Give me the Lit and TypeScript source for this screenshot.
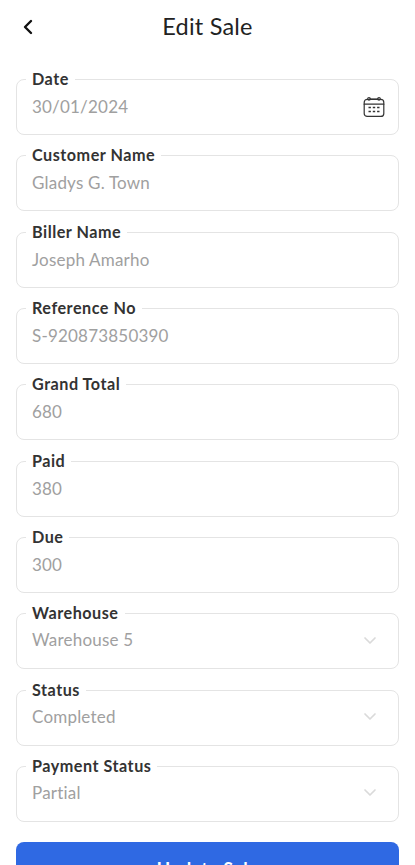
import { LitElement, html, css } from "lit";
import { customElement } from "lit/decorators.js";

const fields: [string, string, string?][] = [
  ["Date", "30/01/2024", "cal"],
  ["Customer Name", "Gladys G. Town"],
  ["Biller Name", "Joseph Amarho"],
  ["Reference No", "S-920873850390"],
  ["Grand Total", "680"],
  ["Paid", "380"],
  ["Due", "300"],
  ["Warehouse", "Warehouse 5", "down"],
  ["Status", "Completed", "down"],
  ["Payment Status", "Partial", "down"],
];

const cal = html`<svg class="cal" viewBox="0 0 22 22" fill="none" stroke="#333" stroke-width="1.2" stroke-linecap="round">
  <rect x="1.2" y="3.4" width="19.6" height="17" rx="3"/>
  <path d="M1.2 8.2h19.6M6.6 3h8.8"/>
  <circle cx="6" cy="2.8" r="1.3"/><circle cx="16" cy="2.8" r="1.3"/>
  <path d="M5.5 11.6h2.4M9.8 11.6h2.4M14.1 11.6h2.4M5.5 15.4h2.4M9.8 15.4h2.4M14.1 15.4h2.4" stroke-width="1.5" stroke-linecap="butt"/>
</svg>`;
const down = html`<svg class="down" viewBox="0 0 14 9" fill="none" stroke="#dadada" stroke-width="1.7" stroke-linecap="round" stroke-linejoin="round"><path d="M2 2l5 5 5-5"/></svg>`;

@customElement("app-root")
export class AppRoot extends LitElement {
  static styles = css`
    :host { display: block; width: 415px; height: 865px; overflow: hidden; background: #fff; }
    .head { height: 54px; display: flex; align-items: center; justify-content: center; position: relative; }
    .head h1 { margin: 0; font: 400 23.5px/1 Lato, "Noto Sans", sans-serif; letter-spacing: .2px; color: #222; }
    .back { position: absolute; left: 23px; top: 19px; width: 10px; height: 16px; }
    .form { display: flex; flex-direction: column; gap: 20.33px; padding: 25px 16px 0; }
    .field { position: relative; height: 56px; box-sizing: border-box; border: 1px solid #e4e4e4; border-radius: 8px; display: flex; align-items: center; justify-content: space-between; padding: 0 15px; }
    .label { position: absolute; left: 9px; top: -11px; padding: 0 6px; background: #fff; font: 700 16.2px/20px Lato, "Noto Sans", sans-serif; letter-spacing: .5px; color: #333; }
    .val { font: 400 17px/22px Lato, "Noto Sans", sans-serif; color: #a0a0a0; letter-spacing: .2px; }
    .sel { padding-bottom: 2px; }
    .cal { width: 22px; height: 22px; margin-right: -2px; }
    .down { width: 14px; height: 9px; margin-right: 6px; }
    .btn { flex: none; height: 54px; background: #2f69e3; border-radius: 8px; color: #fff; font: 700 18px/54px Lato, "Noto Sans", sans-serif; letter-spacing: .5px; text-align: center; }
  `;
  render() {
    return html`
      <div class="head">
        <svg class="back" viewBox="0 0 10 16" fill="none" stroke="#111" stroke-width="2.4" stroke-linecap="round" stroke-linejoin="round"><path d="M8 2 2 8l6 6"/></svg>
        <h1>Edit Sale</h1>
      </div>
      <div class="form">
        ${fields.map(([l, v, k]) => html`<div class="field ${k === "down" ? "sel" : ""}"><span class="label">${l}</span><span class="val">${v}</span>${k === "cal" ? cal : k === "down" ? down : ""}</div>`)}
        <div class="btn">Update Sale</div>
      </div>`;
  }
}
